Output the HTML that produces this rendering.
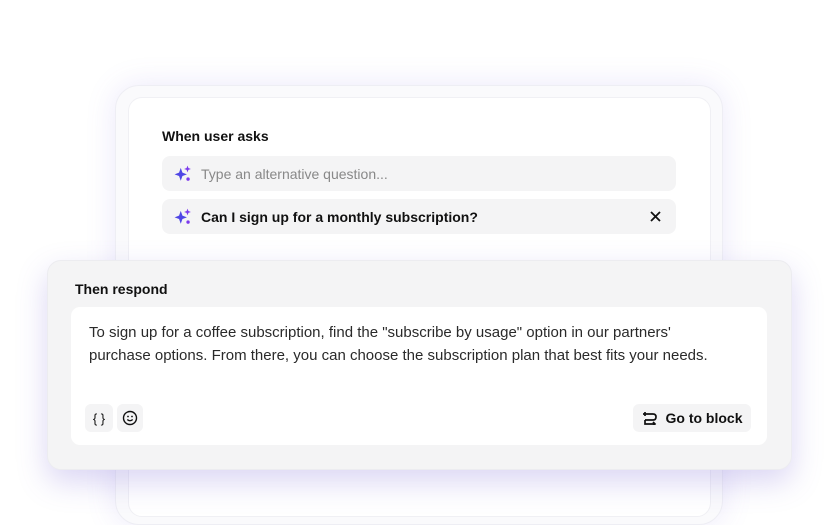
<!DOCTYPE html>
<html><head><style>
*{margin:0;padding:0;box-sizing:border-box}
body{width:840px;height:505px;background:#fff;font-family:"Liberation Sans",sans-serif;position:relative;overflow:hidden;color:#111}
.frame{position:absolute;left:115px;top:85px;width:608px;height:440px;border-radius:24px;background:#fafafc;box-shadow:0 0 30px rgba(120,100,220,.15);border:1px solid #eeeef4}
.inner{position:absolute;left:128px;top:97px;width:583px;height:420px;border-radius:14px;background:#fff;border:1px solid #f0f0f4}
.t{position:absolute;font-size:14px;font-weight:bold}
.box{position:absolute;left:162px;width:514px;height:35px;background:#f4f4f5;border-radius:8px;font-size:14px;display:flex;align-items:center;padding-left:39px}
.sp{position:absolute;left:12px;top:9px}
.card{position:absolute;left:47px;top:260px;width:745px;height:210px;background:#f4f4f5;border-radius:14px;box-shadow:0 12px 30px rgba(110,90,210,.25);border:1px solid #ececf0}
.white{position:absolute;left:23px;top:46px;width:696px;height:138px;background:#fff;border-radius:9px}
.txt{position:absolute;left:18px;top:14px;font-size:15px;line-height:23px;color:#2a2a2a;width:670px;white-space:nowrap}
.btn{position:absolute;top:97px;height:28px;background:#f4f4f5;border-radius:6px;display:flex;align-items:center;justify-content:center;font-size:14px}
</style></head><body>
<div class="frame"></div>
<div class="inner"></div>
<div class="t" style="left:162px;top:128px">When user asks</div>
<div class="box" style="top:156px;color:#888"><svg class="sp" width="18" height="18" viewBox="0 0 16 16"><path d="M6 2.5 L7.5 6.8 L11.5 8.3 L7.5 9.8 L6 14 L4.5 9.8 L0.5 8.3 L4.5 6.8Z" fill="#4f46e5"/><path d="M12 0.5 L12.8 2.7 L15 3.5 L12.8 4.3 L12 6.5 L11.2 4.3 L9 3.5 L11.2 2.7Z" fill="#7c3aed"/><circle cx="12.5" cy="12.5" r="1.5" fill="#7c3aed"/></svg>Type an alternative question...</div>
<div class="box" style="top:199px;font-weight:bold;color:#111"><svg class="sp" width="18" height="18" viewBox="0 0 16 16"><path d="M6 2.5 L7.5 6.8 L11.5 8.3 L7.5 9.8 L6 14 L4.5 9.8 L0.5 8.3 L4.5 6.8Z" fill="#4f46e5"/><path d="M12 0.5 L12.8 2.7 L15 3.5 L12.8 4.3 L12 6.5 L11.2 4.3 L9 3.5 L11.2 2.7Z" fill="#7c3aed"/><circle cx="12.5" cy="12.5" r="1.5" fill="#7c3aed"/></svg>Can I sign up for a monthly subscription?
<svg style="position:absolute;right:15px;top:12px" width="11" height="11" viewBox="0 0 11 11"><path d="M1 1L10 10M10 1L1 10" stroke="#111" stroke-width="1.8"/></svg></div>
<div class="card">
<div class="t" style="left:27px;top:20px">Then respond</div>
<div class="white">
<div class="txt">To sign up for a coffee subscription, find the "subscribe by usage" option in our partners'<br>purchase options. From there, you can choose the subscription plan that best fits your needs.</div>
<div class="btn" style="left:14px;width:28px;font-size:13px">{ }</div>
<div class="btn" style="left:46px;width:26px"><svg width="16" height="16" viewBox="0 0 16 16"><circle cx="8" cy="8" r="6.5" fill="none" stroke="#111" stroke-width="1.4"/><circle cx="6" cy="6.5" r=".9" fill="#111"/><circle cx="10" cy="6.5" r=".9" fill="#111"/><path d="M5.3 9.5Q8 12 10.7 9.5" fill="none" stroke="#111" stroke-width="1.3"/></svg></div>
<div class="btn" style="left:562px;width:118px;font-weight:bold;gap:8px"><svg width="16" height="14" viewBox="0 0 16 14"><path d="M1 3H11Q14 3 14 6Q14 9 11 9H3M3 1V5M3 9V13H13M11 11L13 13L11 15" fill="none" stroke="#111" stroke-width="1.7"/></svg>Go to block</div>
</div>
</div>
</body></html>
